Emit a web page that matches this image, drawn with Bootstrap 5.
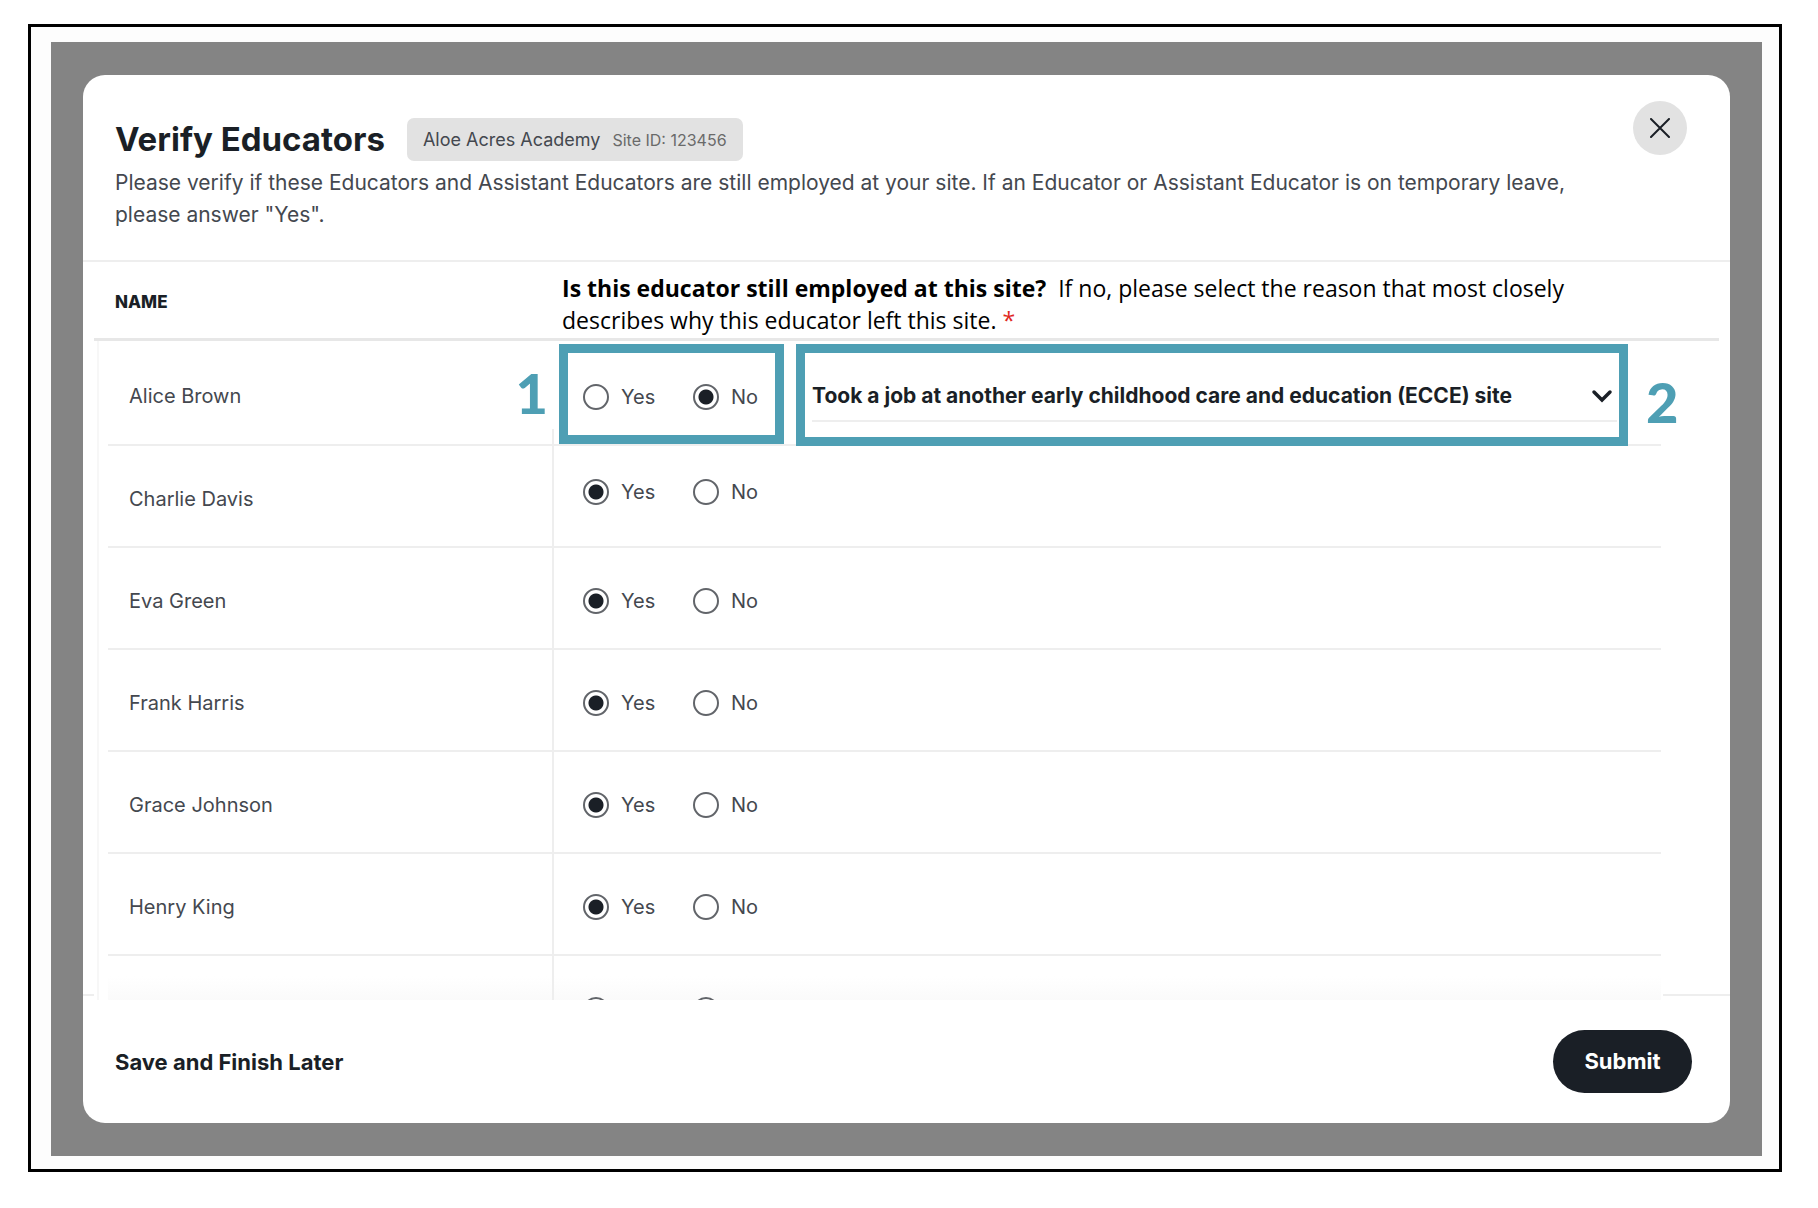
<!DOCTYPE html>
<html lang="en">
<head>
<meta charset="utf-8">
<meta name="viewport" content="width=device-width, initial-scale=1">
<title>Verify Educators</title>
<link href="https://cdn.jsdelivr.net/npm/bootstrap@5.3.0/dist/css/bootstrap.min.css" rel="stylesheet">
<style>
  :root { --ink: #1a1f26; --soft: #44484f; --rule: #eeeeee; --teal: #4e9fb4; }
  body { background: #fff; color: var(--soft); font-family: Inter, "Liberation Sans", sans-serif; font-size: 20px; line-height: 32px; padding: 24px 36px 36px 28px; }
  .page-frame { border: 3px solid #000; background: #fdfdfd; padding: 15px 17px 13px 20px; }
  .backdrop { background: #848484; padding: 33px 32px; }
  .dialog { background: #fff; border-radius: 22px; overflow: hidden; }
  .dialog-head { padding: 26px 43px 29px 32px; border-bottom: 2px solid var(--rule); }
  .dialog-title { font-size: 33px; line-height: 43px; font-weight: 700; color: var(--ink); }
  .intro { font-size: 21px; margin-top: 6px; }
  .head-text { padding-top: 17px; }
  .site-tag { background: #e2e2e2; border-radius: 7px; height: 43px; padding: 0 16px; margin-left: 22px; font-size: 18px; gap: 12px; }
  .site-id { font-size: 16px; color: #6a6a6a; }
  .close-btn { width: 54px; height: 54px; background: #e2e2e2; color: var(--ink); }
  .list-region { max-height: calc(100vh - 470px); overflow-y: auto; scrollbar-width: none; padding: 0 11px; }
  .list-region::-webkit-scrollbar { display: none; }
  .roster { width: 100%; table-layout: fixed; border-collapse: separate; border-spacing: 0; }
  .roster th { border-bottom: 3px solid #e7e7e7; height: 79px; }
  .roster .head-name { font-size: 17px; font-weight: 800; color: var(--ink); padding: 4px 0 0 21px; }
  .roster .head-question { font-family: "Open Sans", "Noto Sans", sans-serif; font-size: 23px; font-weight: 400; color: #000; padding: 10px 0 2px 10px; }
  .required { color: #e0281e; }
  .col-edge { width: 14px; }
  .col-person { width: 444px; }
  .col-tail { width: 58px; }
  .roster .edge { border-left: 3px solid #fff; box-shadow: inset 2px 0 #f7f7f7; }
  .roster .person { height: 102px; padding: 5px 0 0 21px; border-bottom: 2px solid var(--rule); font-weight: 400; }
  .roster .reply { padding: 0 33px 0 7px; background: linear-gradient(var(--rule), var(--rule)) left top / 2px 100% no-repeat; border-bottom: 2px solid var(--rule); }
  .roster .flagged .person { height: 105px; padding-top: 7px; }
  .roster .flagged .reply { padding-top: 3px; background-position: left bottom; background-size: 2px 15px; vertical-align: top; }
  .choice-set { width: 225px; height: 100px; padding: 5px 0 0 15px; border: 9px solid transparent; }
  .raised { padding: 0 0 9px 15px; }
  .flagged .choice-set, .reason { border-color: var(--teal); }
  .reason { height: 102px; margin: 0 0 -2px 12px; padding: 18px 2px 0 7px; border: 9px solid var(--teal); }
  .choice { width: 110px; flex: none; }
  .choice + .choice { width: 82px; }
  .choice input { appearance: none; width: 26px; height: 26px; margin: 0 12px 0 0; border: 2px solid #62656a; border-radius: 50%; background: #fff; flex: none; }
  .choice input:checked { background: radial-gradient(circle, var(--ink) 7px, #fff 8px); }
  .reason select { appearance: none; width: 100%; height: 51px; border: 0; border-bottom: 2px solid var(--rule); background: #fff; padding: 0; font-size: 21px; font-weight: 700; color: var(--ink); }
  .chevron { right: 6px; top: 36px; pointer-events: none; }
  .step { font-family: Lato, sans-serif; font-weight: 900; font-size: 56px; line-height: 56px; color: var(--teal); }
  .step-one { right: 100%; margin-right: 20px; top: 12px; }
  .step-two { left: 100%; margin-left: 27px; top: 21px; }
  .roster .cutoff td { border-bottom: 0; }
  .roster .cutoff .person { background: linear-gradient(#fff 20px, #fafafa 46px); }
  .roster .cutoff .reply { background: linear-gradient(var(--rule), var(--rule)) left top / 2px 100% no-repeat, linear-gradient(#fff 20px, #fafafa 46px); }
  .dialog-foot { padding: 30px 38px 30px 32px; }
  .dialog-foot::before, .dialog-foot::after { content: ""; position: absolute; top: -6px; height: 2px; background: var(--rule); }
  .dialog-foot::before { left: 0; width: 11px; }
  .dialog-foot::after { right: 0; width: 67px; }
  .save-btn { font-size: 22px; line-height: 32px; font-weight: 700; color: var(--ink); }
  .submit-btn { width: 139px; height: 63px; font-size: 22px; font-weight: 700; background: #1a1f26; color: #fff; }
</style>
</head>
<body>
<div class="page-frame">
 <div class="backdrop">
  <main class="dialog">
   <header class="dialog-head d-flex justify-content-between align-items-start">
    <div class="head-text">
     <div class="d-flex align-items-center">
      <h1 class="dialog-title mb-0">Verify Educators</h1>
      <div class="site-tag d-flex align-items-center"><span>Aloe Acres Academy</span><span class="site-id">Site ID: 123456</span></div>
     </div>
     <p class="intro mb-0">Please verify if these Educators and Assistant Educators are still employed at your site. If an Educator or Assistant Educator is on temporary leave, please answer "Yes".</p>
    </div>
    <button type="button" class="close-btn btn rounded-circle border-0 p-0 d-flex align-items-center justify-content-center flex-shrink-0" aria-label="Close">
     <svg width="20" height="20" viewBox="0 0 20 20" fill="none" stroke="currentColor" stroke-width="2" stroke-linecap="round" aria-hidden="true"><path d="M1 1L19 19M19 1L1 19"/></svg>
    </button>
   </header>

   <div class="list-region">
    <table class="roster">
     <colgroup><col class="col-edge"><col class="col-person"><col><col class="col-tail"></colgroup>
     <thead>
      <tr>
       <th scope="col" colspan="2" class="head-name">NAME</th>
       <th scope="col" colspan="2" class="head-question"><b>Is this educator still employed at this site?</b>&nbsp; If no, please select the reason that most closely<br>describes why this educator left this site. <span class="required">*</span></th>
      </tr>
     </thead>
     <tbody>
      <tr class="flagged">
       <td class="edge"></td><td class="person">Alice Brown</td>
       <td class="reply">
        <div class="d-flex align-items-start">
         <div class="choice-set position-relative d-flex align-items-center flex-shrink-0">
          <span class="step step-one position-absolute">1</span>
          <label class="choice d-flex align-items-center"><input type="radio" name="alice">Yes</label>
          <label class="choice d-flex align-items-center"><input type="radio" name="alice" checked>No</label>
         </div>
         <div class="reason position-relative flex-grow-1">
          <select aria-label="Reason for leaving"><option>Took a job at another early childhood care and education (ECCE) site</option></select>
          <svg class="chevron position-absolute" width="22" height="14" viewBox="0 0 22 14" fill="none" stroke="#1a1f26" stroke-width="3.5" stroke-linecap="round" stroke-linejoin="miter" aria-hidden="true"><path d="M3 3L11 11L19 3"/></svg>
          <span class="step step-two position-absolute">2</span>
         </div>
        </div>
       </td><td></td>
      </tr>
      <tr>
       <td class="edge"></td><td class="person">Charlie Davis</td>
       <td class="reply"><div class="choice-set raised d-flex align-items-center">
        <label class="choice d-flex align-items-center"><input type="radio" name="charlie" checked>Yes</label>
        <label class="choice d-flex align-items-center"><input type="radio" name="charlie">No</label></div></td><td></td>
      </tr>
      <tr>
       <td class="edge"></td><td class="person">Eva Green</td>
       <td class="reply"><div class="choice-set d-flex align-items-center">
        <label class="choice d-flex align-items-center"><input type="radio" name="eva" checked>Yes</label>
        <label class="choice d-flex align-items-center"><input type="radio" name="eva">No</label></div></td><td></td>
      </tr>
      <tr>
       <td class="edge"></td><td class="person">Frank Harris</td>
       <td class="reply"><div class="choice-set d-flex align-items-center">
        <label class="choice d-flex align-items-center"><input type="radio" name="frank" checked>Yes</label>
        <label class="choice d-flex align-items-center"><input type="radio" name="frank">No</label></div></td><td></td>
      </tr>
      <tr>
       <td class="edge"></td><td class="person">Grace Johnson</td>
       <td class="reply"><div class="choice-set d-flex align-items-center">
        <label class="choice d-flex align-items-center"><input type="radio" name="grace" checked>Yes</label>
        <label class="choice d-flex align-items-center"><input type="radio" name="grace">No</label></div></td><td></td>
      </tr>
      <tr>
       <td class="edge"></td><td class="person">Henry King</td>
       <td class="reply"><div class="choice-set d-flex align-items-center">
        <label class="choice d-flex align-items-center"><input type="radio" name="henry" checked>Yes</label>
        <label class="choice d-flex align-items-center"><input type="radio" name="henry">No</label></div></td><td></td>
      </tr>
      <tr class="cutoff">
       <td class="edge"></td><td class="person"></td>
       <td class="reply"><div class="choice-set d-flex align-items-center">
        <label class="choice d-flex align-items-center"><input type="radio" name="next" aria-label="Yes"></label>
        <label class="choice d-flex align-items-center"><input type="radio" name="next" aria-label="No"></label></div></td><td></td>
      </tr>
     </tbody>
    </table>
   </div>

   <footer class="dialog-foot position-relative d-flex justify-content-between align-items-center">
    <button type="button" class="save-btn btn border-0 p-0">Save and Finish Later</button>
    <button type="submit" class="submit-btn btn border-0 rounded-pill p-0">Submit</button>
   </footer>
  </main>
 </div>
</div>
<script src="https://cdn.jsdelivr.net/npm/bootstrap@5.3.0/dist/js/bootstrap.bundle.min.js"></script>
</body>
</html>
